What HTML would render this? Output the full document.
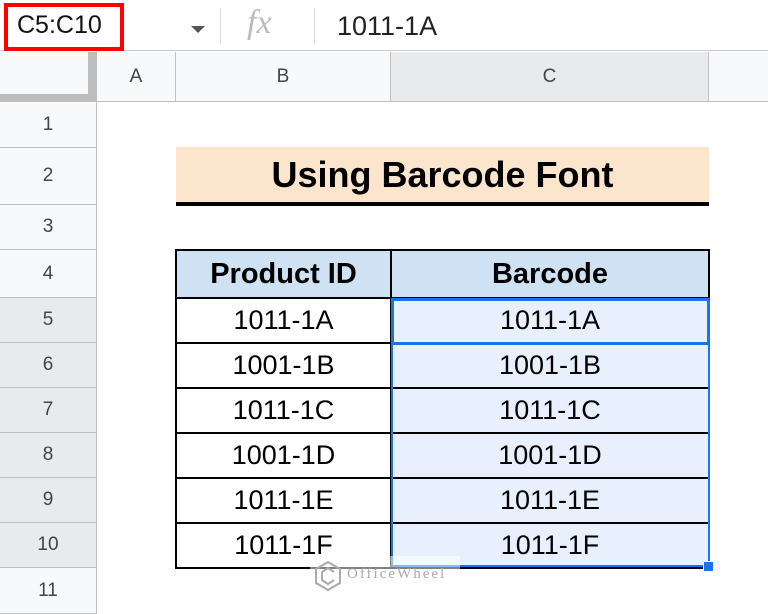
<!DOCTYPE html>
<html><head><style>
*{margin:0;padding:0;box-sizing:border-box}
body{width:768px;height:614px;overflow:hidden;background:#fff;font-family:"Liberation Sans",Arial,sans-serif;position:relative}
.a{position:absolute}
.ch{position:absolute;top:52px;height:50px;background:#f8f9fa;border-right:1px solid #c0c0c0;border-bottom:1px solid #c0c0c0;color:#444;font-size:19px;display:flex;align-items:center;justify-content:center}
.rh{position:absolute;left:0;width:97px;background:#f8f9fa;border-bottom:1px solid #c0c0c0;border-right:1px solid #c0c0c0;color:#444;font-size:19px;display:flex;align-items:center;justify-content:center}
.sel{background:#e8eaed}
.c{position:absolute;display:flex;align-items:center;justify-content:center;font-size:27px;color:#000}
</style></head><body>
<div class="a" style="left:0;top:0;width:768px;height:51px;border-bottom:1px solid #c8c8c8;background:#fff"></div>
<div class="a" style="left:4px;top:3px;width:120px;height:48px;border:4px solid #f00"></div>
<div class="a" style="left:17px;top:11px;font-size:25px;color:#111">C5:C10</div>
<div class="a" style="left:191px;top:26px;width:0;height:0;border-left:7px solid transparent;border-right:7px solid transparent;border-top:7px solid #555"></div>
<div class="a" style="left:220px;top:8px;width:1px;height:36px;background:#ddd"></div>
<div class="a" style="left:247px;top:4px;font-family:'Liberation Serif',serif;font-style:italic;font-size:34px;color:#bbb">fx</div>
<div class="a" style="left:314px;top:8px;width:1px;height:36px;background:#ddd"></div>
<div class="a" style="left:337px;top:11px;font-size:27px;color:#222">1011-1A</div>
<div class="a" style="left:0;top:52px;width:97px;height:50px;background:#f8f9fa;border-right:9px solid #bdbdbd;border-bottom:8px solid #bdbdbd"></div>
<div class="ch" style="left:97px;width:79px">A</div>
<div class="ch" style="left:176px;width:215px">B</div>
<div class="ch sel" style="left:391px;width:318px">C</div>
<div class="ch" style="left:709px;width:59px;border-right:none"></div>
<div class="rh" style="top:102px;height:46px">1</div>
<div class="rh" style="top:148px;height:57px">2</div>
<div class="rh" style="top:205px;height:45px">3</div>
<div class="rh" style="top:250px;height:48px">4</div>
<div class="rh sel" style="top:298px;height:45px">5</div>
<div class="rh sel" style="top:343px;height:45px">6</div>
<div class="rh sel" style="top:388px;height:45px">7</div>
<div class="rh sel" style="top:433px;height:45px">8</div>
<div class="rh sel" style="top:478px;height:45px">9</div>
<div class="rh sel" style="top:523px;height:45px">10</div>
<div class="rh" style="top:568px;height:46px">11</div>
<div class="c" style="left:176px;top:147px;width:533px;height:56px;background:#fce5cd;font-weight:bold;font-size:36px">Using Barcode Font</div>
<div class="a" style="left:176px;top:202px;width:533px;height:4px;background:#000"></div>
<div class="a" style="left:391px;top:298px;width:318px;height:270px;background:#e8f0fe"></div>
<div class="c" style="left:176px;top:250px;width:215px;height:48px;background:#cfe2f3;font-weight:bold;font-size:29px">Product ID</div>
<div class="c" style="left:391px;top:250px;width:318px;height:48px;background:#cfe2f3;font-weight:bold;font-size:29px">Barcode</div>
<div class="a" style="left:175px;top:249px;width:535px;height:320px;border:2px solid #000"></div>
<div class="a" style="left:390px;top:250px;width:2px;height:318px;background:#000"></div>
<div class="a" style="left:176px;top:297px;width:533px;height:2px;background:#000"></div>
<div class="a" style="left:176px;top:342px;width:533px;height:2px;background:#000"></div>
<div class="a" style="left:176px;top:387px;width:533px;height:2px;background:#000"></div>
<div class="a" style="left:176px;top:432px;width:533px;height:2px;background:#000"></div>
<div class="a" style="left:176px;top:477px;width:533px;height:2px;background:#000"></div>
<div class="a" style="left:176px;top:522px;width:533px;height:2px;background:#000"></div>
<div class="c" style="left:176px;top:298px;width:215px;height:45px">1011-1A</div>
<div class="c" style="left:176px;top:343px;width:215px;height:45px">1001-1B</div>
<div class="c" style="left:176px;top:388px;width:215px;height:45px">1011-1C</div>
<div class="c" style="left:176px;top:433px;width:215px;height:45px">1001-1D</div>
<div class="c" style="left:176px;top:478px;width:215px;height:45px">1011-1E</div>
<div class="c" style="left:176px;top:523px;width:215px;height:45px">1011-1F</div>
<div class="c" style="left:391px;top:298px;width:318px;height:45px">1011-1A</div>
<div class="c" style="left:391px;top:343px;width:318px;height:45px">1001-1B</div>
<div class="c" style="left:391px;top:388px;width:318px;height:45px">1011-1C</div>
<div class="c" style="left:391px;top:433px;width:318px;height:45px">1001-1D</div>
<div class="c" style="left:391px;top:478px;width:318px;height:45px">1011-1E</div>
<div class="c" style="left:391px;top:523px;width:318px;height:45px">1011-1F</div>
<div class="a" style="left:391px;top:298px;width:319px;height:269px;border:2px solid #1a73e8"></div>
<div class="a" style="left:391px;top:298px;width:319px;height:47px;border:3px solid #1a73e8"></div>
<div class="a" style="left:703px;top:561px;width:11px;height:11px;background:#1a73e8;border:1px solid #fff"></div>
<div class="a" style="left:310px;top:556px;width:150px;height:32px;background:rgba(255,255,255,0.5)"></div>
<svg class="a" style="left:313px;top:560px" width="30" height="32" viewBox="0 0 30 32"><path d="M15 2 L27 9 L27 23 L15 30 L3 23 L3 9 Z M9 12 L15 8 L21 12 M9 12 L9 20 L15 24 L21 20" fill="none" stroke="#aaa" stroke-width="2"/></svg>
<div class="a" style="left:347px;top:566px;font-family:'Liberation Serif',serif;font-size:15px;letter-spacing:2px;color:#aaa">OfficeWheel</div>
</body></html>
